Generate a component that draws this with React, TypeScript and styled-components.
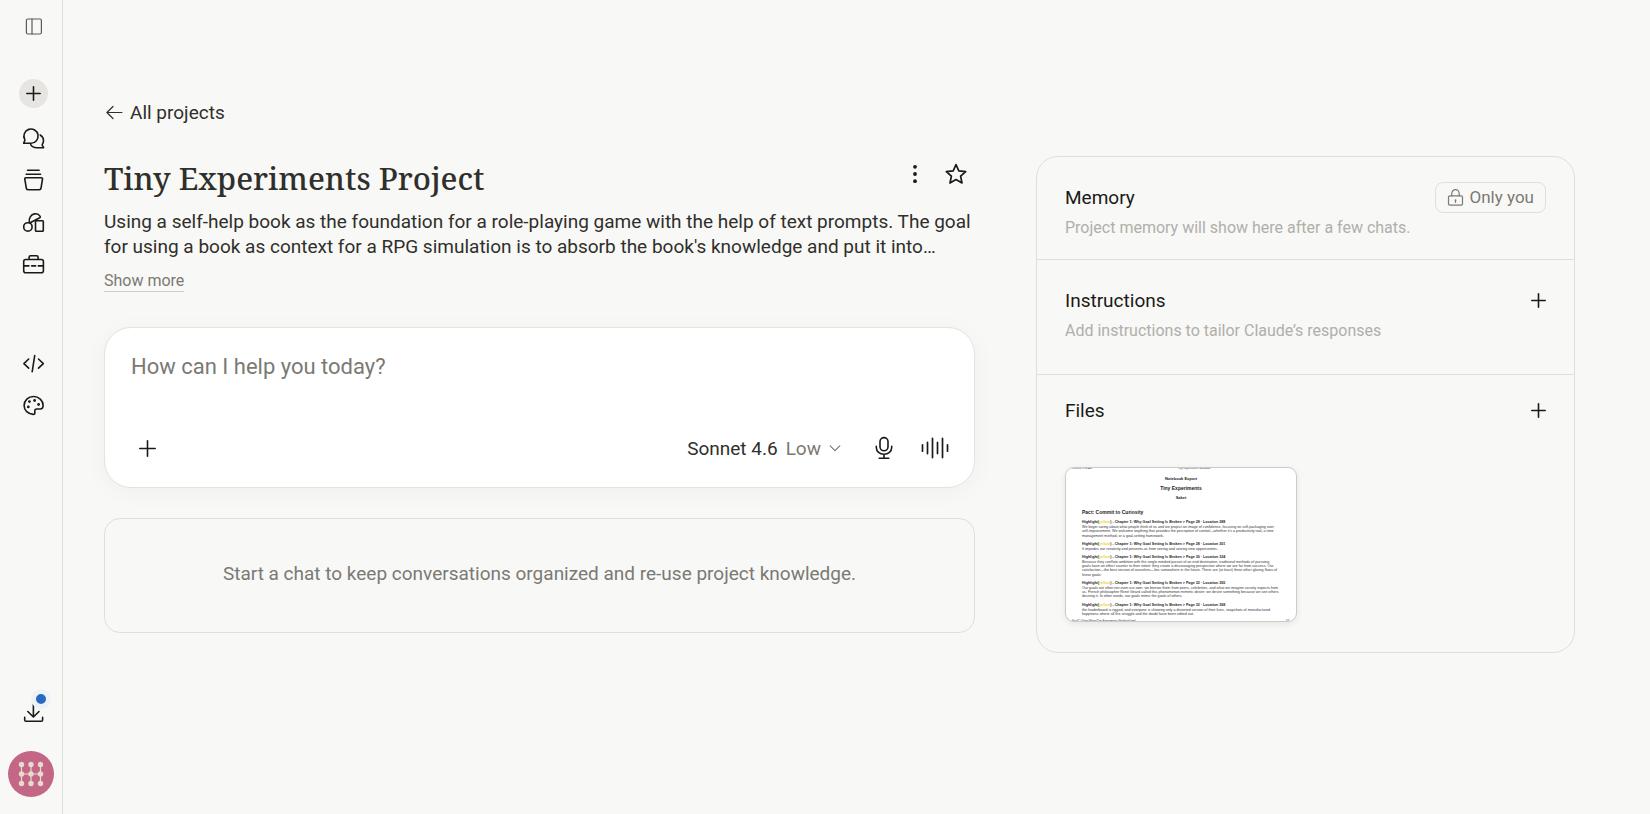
import React from "react";
import styled, { createGlobalStyle } from "styled-components";

const color = {
  page: "#f8f8f6",
  line: "#dfdfdb",
  ink: "#2f2f2b",
  strong: "#1a1a18",
  muted: "#7b7974",
  faint: "#b0afaa",
};

const GlobalStyle = createGlobalStyle`
  *, *::before, *::after { box-sizing: border-box; }
  body {
    margin: 0;
    background: ${color.page};
    color: ${color.ink};
    font-family: Roboto, "Liberation Sans", sans-serif;
    font-size: 19px;
    line-height: 25px;
  }
  button, textarea { font: inherit; color: inherit; }
  h1, h2, p { margin: 0; font-weight: 400; }
  svg { display: block; flex: none; }
`;

const Shell = styled.div`
  display: flex;
  min-height: 100vh;
`;

/* ---------- Sidebar ---------- */

const Sidebar = styled.nav`
  display: flex;
  flex-direction: column;
  flex: none;
  width: 63px;
  padding: 5px 0 17px;
  border-right: 1px solid ${color.line};
`;

const RailGroup = styled.div<{ $gap?: number }>`
  display: flex;
  flex-direction: column;
  align-items: center;
  padding-left: 5px;
  margin-top: ${(p) => p.$gap ?? 0}px;
`;

const RailButton = styled.button<{ $quiet?: boolean }>`
  display: flex;
  align-items: center;
  justify-content: center;
  position: relative;
  width: 42px;
  height: 42px;
  padding: 0;
  border: 0;
  background: none;
  color: ${(p) => (p.$quiet ? "#5c5b57" : color.strong)};
  cursor: pointer;
`;

const RoundFill = styled.span`
  display: flex;
  align-items: center;
  justify-content: center;
  width: 29px;
  height: 29px;
  border-radius: 50%;
  background: #e6e5e1;
`;

const RailFooter = styled.div`
  display: flex;
  flex-direction: column;
  align-items: center;
  gap: 18px;
  margin-top: auto;
`;

const UpdateDot = styled.span`
  position: absolute;
  top: -2px;
  right: 4px;
  width: 20px;
  height: 20px;
  border: 5px solid #edf2f7;
  border-radius: 50%;
  background: #276ac4;
`;

const AvatarButton = styled.button`
  width: 46px;
  height: 46px;
  padding: 0;
  border: 0;
  border-radius: 50%;
  background: #c46686;
  overflow: hidden;
  cursor: pointer;
`;

/* ---------- Main area ---------- */

const Main = styled.main`
  flex: 1;
  min-width: 0;
  padding: 100px 75px 40px 41px;
`;

const BackLink = styled.a`
  display: flex;
  align-items: center;
  gap: 7px;
  width: fit-content;
  height: 25px;
  color: ${color.ink};
  text-decoration: none;
`;

const Columns = styled.div`
  display: grid;
  grid-template-columns: minmax(0, 871fr) minmax(0, 539fr);
  align-items: start;
  gap: 61px;
  margin-top: 31px;
`;

const TitleRow = styled.div`
  display: flex;
  align-items: flex-start;
  justify-content: space-between;
`;

const Title = styled.h1`
  font-family: "Noto Serif", "Liberation Serif", serif;
  font-size: 31px;
  font-weight: 500;
  line-height: 44px;
`;

const TitleActions = styled.div`
  display: flex;
  gap: 9px;
  padding: 2px 3px 0 0;
`;

const IconButton = styled.button`
  display: flex;
  align-items: center;
  justify-content: center;
  width: 32px;
  height: 32px;
  padding: 0;
  border: 0;
  background: none;
  color: ${color.strong};
  cursor: pointer;
`;

const Description = styled.p`
  margin-top: 9px;
  display: -webkit-box;
  -webkit-box-orient: vertical;
  -webkit-line-clamp: 2;
  overflow: hidden;
`;

const ShowMore = styled.button`
  display: block;
  margin-top: 11px;
  padding: 0;
  border: 0;
  border-bottom: 1px solid #cfcec9;
  background: none;
  color: ${color.muted};
  font-size: 16px;
  line-height: 21px;
  cursor: pointer;
`;

const Composer = styled.form`
  margin-top: 35px;
  padding: 24px 23px 23px 26px;
  border: 1px solid #e3e3df;
  border-radius: 27px;
  background: #fff;
  box-shadow: 0 4px 24px rgba(0, 0, 0, 0.04);
`;

const Prompt = styled.textarea`
  display: block;
  width: 100%;
  height: 80px;
  padding: 0;
  border: 0;
  outline: 0;
  resize: none;
  background: none;
  font-size: 22px;
  line-height: 30px;
  &::placeholder { color: ${color.muted}; opacity: 1; }
`;

const Controls = styled.div`
  display: flex;
  align-items: center;
  justify-content: space-between;
`;

const ControlGroup = styled.div`
  display: flex;
  align-items: center;
  gap: 19px;
`;

const ModelButton = styled.button`
  display: flex;
  align-items: center;
  gap: 8px;
  height: 32px;
  padding: 0 8px;
  border: 0;
  background: none;
  cursor: pointer;
`;

const Muted = styled.span`
  color: ${color.muted};
`;

const EmptyCard = styled.section`
  display: flex;
  align-items: center;
  justify-content: center;
  min-height: 115px;
  margin-top: 30px;
  padding: 0 24px 4px;
  border: 1px solid ${color.line};
  border-radius: 16px;
  color: ${color.muted};
  text-align: center;
`;

/* ---------- Side panel ---------- */

const Panel = styled.aside`
  border: 1px solid ${color.line};
  border-radius: 22px;
`;

const PanelSection = styled.section<{ $top?: number; $bottom: number }>`
  padding: ${(p) => p.$top ?? 25}px 28px ${(p) => p.$bottom}px 28px;
  & + & { border-top: 1px solid ${color.line}; }
`;

const SectionHead = styled.div`
  display: flex;
  align-items: center;
  justify-content: space-between;
  height: 31px;
`;

const SectionTitle = styled.h2`
  font-size: 19px;
  color: ${color.strong};
`;

const SectionNote = styled.p`
  margin-top: 4px;
  color: ${color.faint};
  font-size: 16px;
  line-height: 22px;
`;

const Badge = styled.span`
  display: flex;
  align-items: center;
  gap: 6px;
  height: 31px;
  padding: 0 11px;
  border: 1px solid ${color.line};
  border-radius: 8px;
  color: ${color.muted};
  font-size: 17px;
`;

const AddButton = styled.button`
  display: flex;
  align-items: center;
  justify-content: center;
  width: 15px;
  height: 31px;
  padding: 0;
  border: 0;
  background: none;
  color: ${color.strong};
  cursor: pointer;
`;

const FileCard = styled.button`
  display: block;
  width: 232px;
  height: 155px;
  margin-top: 41px;
  padding: 0;
  border: 1px solid #cccbc7;
  border-radius: 9px;
  background: #fff;
  box-shadow: 0 2px 6px rgba(0, 0, 0, 0.08);
  overflow: hidden;
  cursor: pointer;
`;

/* ---------- Icons ---------- */

type IconProps = { size?: number; stroke?: number; children: React.ReactNode };

const Icon = ({ size = 25, stroke = 1.6, children }: IconProps) => (
  <svg
    width={size}
    height={size}
    viewBox={`0 0 ${size} ${size}`}
    fill="none"
    stroke="currentColor"
    strokeWidth={stroke}
    strokeLinecap="round"
    strokeLinejoin="round"
    aria-hidden="true"
  >
    {children}
  </svg>
);

const PanelIcon = () => (
  <Icon stroke={1.2}>
    <rect x="5.4" y="5" width="15" height="15" rx="1.5" />
    <path d="M11 5v15" />
  </Icon>
);

const PlusIcon = ({ size, stroke = 1.6 }: { size: number; stroke?: number }) => (
  <Icon size={size} stroke={stroke}>
    <path d={`M${size / 2} .8V${size - 0.8}M.8 ${size / 2}H${size - 0.8}`} />
  </Icon>
);

const ChatsIcon = () => (
  <Icon>
    <path d="M2.7 17.2h7.3a7.1 7.1 0 1 0-6.3-3.8c.2.4.2.8 0 1.2z" />
    <path d="M19.2 9c2 1.2 3.3 3.2 3.3 5.5 0 1.5-.4 2.8-1.2 3.900-.2.3-.2.6 0 .9l1.3 2.4h-6.800c-2.700 0-4.900-.9-6.100-3" />
  </Icon>
);

const ProjectsIcon = () => (
  <Icon>
    <path d="M6.5 2.2h11.600M5.200 6.200h14.300" />
    <path d="M4.800 9.800h15.600c.8 0 1.300.6 1.100 1.400l-1.500 9c-.1.900-.8 1.500-1.700 1.500H7c-.9 0-1.600-.6-1.700-1.500l-1.500-9c-.2-.8.2-1.400 1-1.400z" />
  </Icon>
);

const ArtifactsIcon = () => (
  <Icon>
    <circle cx="6.9" cy="16.9" r="4.200" />
    <rect x="14.5" y="10.700" width="7.800" height="10.600" rx=".8" />
    <path d="M8.300 12.300C7.600 8.500 9.800 4.500 13.600 3.900c2.300-.4 4.400.6 5.600 2.500.3.500.1 1-.4 1.300l-9.700 5.100" />
  </Icon>
);

const ToolboxIcon = () => (
  <Icon>
    <rect x="2.700" y="7.500" width="19.700" height="13.200" rx="2" />
    <path d="M8.100 7.300V5.200c0-.9.600-1.500 1.500-1.500h6c.9 0 1.500.6 1.500 1.500v2.100M2.900 13.900h5M10.700 13.900h3.900M17.300 13.900h5" />
  </Icon>
);

const CodeIcon = () => (
  <Icon>
    <path d="M7.700 8l-4.800 4.600 4.800 4.600M17.500 8l4.800 4.600-4.800 4.600M13.700 4.600l-2.500 16" />
  </Icon>
);

const PaletteIcon = () => (
  <Icon>
    <path d="M12.500 3.500c5.300 0 9.600 3.900 9.600 8.800 0 2.500-1 3.700-2.900 3.700h-3.400c-1.500 0-2.100.8-2 2.200l.1 1.300c.1 1.300-.5 2-1.700 1.900C7 21.100 3.100 17.400 3.100 12.500S7.200 3.500 12.500 3.500z" />
    <g fill="currentColor" stroke="none">
      <circle cx="8.400" cy="8.600" r="1.400" />
      <circle cx="13.600" cy="7.500" r="1.400" />
      <circle cx="17.600" cy="11.500" r="1.400" />
      <circle cx="7.300" cy="13.900" r="1.400" />
    </g>
  </Icon>
);

const DownloadIcon = () => (
  <Icon>
    <path d="M12.400 3.800v13M6.800 11.500l5.600 5.500 5.600-5.500M3.700 17.300v2.600c0 .8.500 1.300 1.300 1.300h15.300c.8 0 1.300-.5 1.300-1.300v-2.600" />
  </Icon>
);

const ArrowLeftIcon = () => (
  <Icon size={19} stroke={1.2}>
    <path d="M2.900 9.500h15M9 3.500l-6.100 6 6.100 6" />
  </Icon>
);

const DotsIcon = () => (
  <Icon size={24}>
    <g fill="currentColor" stroke="none">
      <circle cx="12" cy="4.800" r="1.900" />
      <circle cx="12" cy="12" r="1.900" />
      <circle cx="12" cy="19.200" r="1.900" />
    </g>
  </Icon>
);

const StarIcon = () => (
  <Icon size={24} stroke={1.7}>
    <path d="M12 2.600l2.800 6.200 6.900.8-5.100 4.600 1.400 6.800-6-3.400-6 3.400 1.400-6.800-5.100-4.600 6.900-.8z" />
  </Icon>
);

const ChevronIcon = () => (
  <Icon size={12} stroke={1.2}>
    <path d="M1.200 3.800L6 8.600l4.800-4.800" stroke={color.muted} />
  </Icon>
);

const MicIcon = () => (
  <Icon size={24}>
    <rect x="8" y="1.600" width="8" height="13.200" rx="4" />
    <path d="M4.300 10.200v1.300c0 4 3.400 6.700 7.700 6.700s7.700-2.700 7.700-6.700v-1.300M12 18.200v3.700M7.200 22.200h9.600" />
  </Icon>
);

const WaveIcon = () => (
  <Icon size={28} stroke={1.7}>
    <path d="M1.500 10.800v6.400M6.500 8.400v11.200M11.500 4.400v19.200M16.500 8.400v11.200M21.500 4.400v19.200M26.500 10.800v6.400" />
  </Icon>
);

const LockIcon = () => (
  <Icon size={17} stroke={1.2}>
    <rect x="1.500" y="6.800" width="14" height="9.400" rx="1.400" />
    <path d="M4.800 6.800V4.400a3.700 3.700 0 0 1 7.400 0v2.400M8.500 11.500v1.800" />
    <circle cx="8.500" cy="11.200" r=".9" fill="currentColor" stroke="none" />
  </Icon>
);

const AvatarMark = () => (
  <svg width="46" height="46" viewBox="0 0 46 46" fill="#e5dccd" aria-hidden="true">
    <path d="M13.500 13.500v19M23 13.500v19M32.500 13.500v19M13.500 23h19" stroke="#e5dccd" strokeWidth="1.200" />
    {[13.5, 23, 32.5].map((x) =>
      [13.5, 23, 32.5].map((y) => <circle key={`${x}-${y}`} cx={x} cy={y} r="2.700" />)
    )}
  </svg>
);

/* ---------- File preview ---------- */

const PreviewSvg = styled.svg`
  width: 100%;
  height: 100%;
  font-family: "Liberation Sans", sans-serif;
  font-size: 11px;
  fill: #333;
`;

const PreviewHeading = styled.text`
  font-weight: 700;
  fill: #222;
`;

type Highlight = { page: number; location: number; y: number; lines: string[] };

const highlights: Highlight[] = [
  {
    page: 28, location: 288, y: 166,
    lines: [
      "We begin caring about what people think of us and we project an image of confidence, focusing on self-packaging over",
      "self-improvement. We welcome anything that provides the perception of control—whether it’s a productivity tool, a time",
      "management method, or a goal-setting framework.",
    ],
  },
  {
    page: 28, location: 301, y: 231,
    lines: ["It impedes our creativity and prevents us from seeing and seizing new opportunities."],
  },
  {
    page: 30, location: 324, y: 270,
    lines: [
      "Because they conflate ambition with the single-minded pursuit of an end destination, traditional methods of pursuing",
      "goals have an effect counter to their intent: they create a discouraging perspective where we are far from success. Our",
      "satisfaction—the best version of ourselves—lies somewhere in the future. There are (at least) three other glaring flaws of",
      "linear goals:",
    ],
  },
  {
    page: 32, location: 365, y: 348,
    lines: [
      "Our goals are often not even our own; we borrow them from peers, celebrities, and what we imagine society expects from",
      "us. French philosopher René Girard called this phenomenon mimetic desire: we desire something because we see others",
      "desiring it. In other words, our goals mimic the goals of others.",
    ],
  },
  {
    page: 32, location: 368, y: 414,
    lines: [
      "the leaderboard is rigged, and everyone is showing only a distorted version of their lives, snapshots of manufactured",
      "happiness where all the struggle and the doubt have been edited out.",
    ],
  },
];

const FilePreview = () => (
  <PreviewSvg viewBox="0 0 690 459" preserveAspectRatio="xMidYMin slice" role="img" aria-label="Tiny Experiments notebook">
    <text x="18" y="3" fontSize="8">9/18/25, 9:14 AM</text>
    <text x="384" y="3" fontSize="8" textAnchor="middle">Tiny Experiments Notebook</text>
    <PreviewHeading x="345" y="35" fontSize="12" textAnchor="middle">Notebook Export</PreviewHeading>
    <PreviewHeading x="345" y="65" fontSize="15" textAnchor="middle">Tiny Experiments</PreviewHeading>
    <PreviewHeading x="345" y="93" fontSize="12" textAnchor="middle">Saket</PreviewHeading>
    <PreviewHeading x="48" y="139" fontSize="15">Pact: Commit to Curiosity</PreviewHeading>
    {highlights.map((h) => (
      <g key={h.location}>
        <PreviewHeading x="48" y={h.y} fontSize="11">
          Highlight(<tspan fill="#f2d21f">yellow</tspan>) - Chapter 1: Why Goal Setting Is Broken &gt; Page {h.page} · Location {h.location}
        </PreviewHeading>
        {h.lines.map((line, i) => (
          <text key={line} x="48" y={h.y + 14 + i * 13}>{line}</text>
        ))}
      </g>
    ))}
    <text x="18" y="462" fontSize="8">file:///C:/Users/Notes/Tiny Experiments-Notebook.html</text>
    <text x="670" y="462" fontSize="8" textAnchor="end">1/7</text>
  </PreviewSvg>
);

/* ---------- Page ---------- */

export default function App() {
  return (
    <>
      <GlobalStyle />
      <Shell>
        <Sidebar aria-label="Main">
          <RailGroup>
            <RailButton $quiet aria-label="Open sidebar"><PanelIcon /></RailButton>
          </RailGroup>
          <RailGroup $gap={25}>
            <RailButton aria-label="New chat">
              <RoundFill><PlusIcon size={15} /></RoundFill>
            </RailButton>
          </RailGroup>
          <RailGroup $gap={3}>
            <RailButton aria-label="Chats"><ChatsIcon /></RailButton>
            <RailButton aria-label="Projects"><ProjectsIcon /></RailButton>
            <RailButton aria-label="Artifacts"><ArtifactsIcon /></RailButton>
            <RailButton aria-label="Customize"><ToolboxIcon /></RailButton>
          </RailGroup>
          <RailGroup $gap={57}>
            <RailButton aria-label="Code"><CodeIcon /></RailButton>
            <RailButton aria-label="Design"><PaletteIcon /></RailButton>
          </RailGroup>
          <RailFooter>
            <RailGroup>
              <RailButton aria-label="Get apps">
                <DownloadIcon />
                <UpdateDot />
              </RailButton>
            </RailGroup>
            <AvatarButton aria-label="Account"><AvatarMark /></AvatarButton>
          </RailFooter>
        </Sidebar>

        <Main>
          <BackLink href="#projects">
            <ArrowLeftIcon />
            All projects
          </BackLink>

          <Columns>
            <div>
              <TitleRow>
                <Title>Tiny Experiments Project</Title>
                <TitleActions>
                  <IconButton aria-label="More options"><DotsIcon /></IconButton>
                  <IconButton aria-label="Star project"><StarIcon /></IconButton>
                </TitleActions>
              </TitleRow>
              <Description>
                Using a self-help book as the foundation for a role-playing game with the help of text prompts. The goal
                for using a book as context for a RPG simulation is to absorb the book's knowledge and put it into…
              </Description>
              <ShowMore>Show more</ShowMore>

              <Composer onSubmit={(e) => e.preventDefault()}>
                <Prompt aria-label="Message" placeholder="How can I help you today?" />
                <Controls>
                  <IconButton type="button" aria-label="Add content"><PlusIcon size={17} /></IconButton>
                  <ControlGroup>
                    <ModelButton type="button">
                      <span>Sonnet 4.6</span>
                      <Muted>Low</Muted>
                      <ChevronIcon />
                    </ModelButton>
                    <IconButton type="button" aria-label="Dictate"><MicIcon /></IconButton>
                    <IconButton type="button" aria-label="Voice mode"><WaveIcon /></IconButton>
                  </ControlGroup>
                </Controls>
              </Composer>

              <EmptyCard>
                <p>Start a chat to keep conversations organized and re-use project knowledge.</p>
              </EmptyCard>
            </div>

            <Panel>
              <PanelSection $bottom={20}>
                <SectionHead>
                  <SectionTitle>Memory</SectionTitle>
                  <Badge><LockIcon />Only you</Badge>
                </SectionHead>
                <SectionNote>Project memory will show here after a few chats.</SectionNote>
              </PanelSection>
              <PanelSection $bottom={32}>
                <SectionHead>
                  <SectionTitle>Instructions</SectionTitle>
                  <AddButton aria-label="Add instructions"><PlusIcon size={15} /></AddButton>
                </SectionHead>
                <SectionNote>Add instructions to tailor Claude’s responses</SectionNote>
              </PanelSection>
              <PanelSection $top={20} $bottom={30}>
                <SectionHead>
                  <SectionTitle>Files</SectionTitle>
                  <AddButton aria-label="Add files"><PlusIcon size={15} /></AddButton>
                </SectionHead>
                <FileCard aria-label="Open Tiny Experiments notebook"><FilePreview /></FileCard>
              </PanelSection>
            </Panel>
          </Columns>
        </Main>
      </Shell>
    </>
  );
}
